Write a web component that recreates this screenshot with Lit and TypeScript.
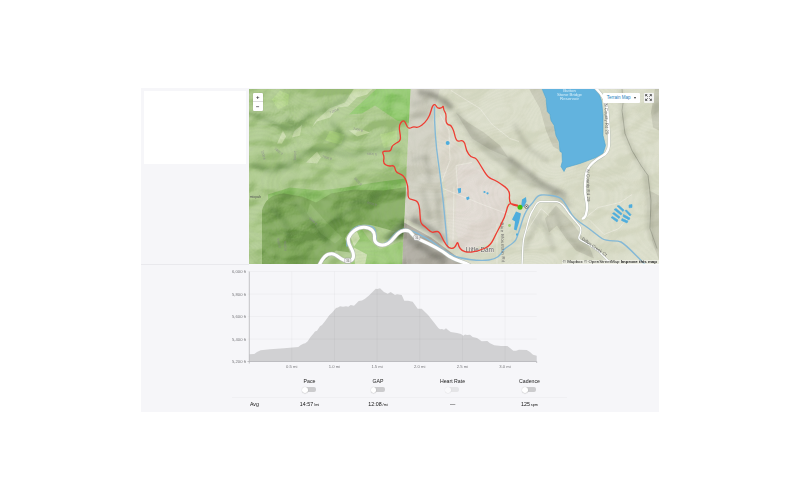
import { LitElement, css, html, svg } from "lit";
import { customElement, property } from "lit/decorators.js";

const ROUTE = [
  [518, 205.5], [513, 205.3], [509, 201], [510, 190], [500, 182.7], [495, 179.7], [488, 177],
  [481, 165.7], [476, 157.3], [471, 157], [466.3, 150.3], [465, 142.3], [462, 139.7],
  [457.3, 141.3], [455, 136.3], [454, 130.7], [450.7, 124.3], [448.3, 124.7], [445.7, 121.3],
  [446.3, 113.3], [443.7, 110], [443.3, 105], [442, 107.5], [437.3, 108], [435.3, 103.5],
  [432.3, 105.3], [430, 114.7], [425, 122.3], [418.3, 127.4], [413.3, 126], [410, 128],
  [407.3, 127], [405.3, 121.3], [402.7, 119.7], [398.7, 125.3], [400.7, 136.3], [400, 140.8],
  [392, 144.7], [391, 150.7], [386.7, 150.5], [382, 151], [384.4, 156.3], [383, 162.5],
  [388.3, 166], [394.5, 164.7], [395.7, 172], [404, 174.7], [408.3, 186], [407.7, 198],
  [413.3, 199.3], [418, 201], [420, 209.3], [420.3, 222.7], [425, 226], [431.7, 232.4],
  [435, 231], [439.3, 231], [443.3, 240], [449, 248.2], [455, 247.6], [457.6, 240.5],
  [458.7, 246], [461.7, 250], [468.3, 252.2], [480, 250], [490.5, 245], [496, 233.3],
  [505, 216.7], [508.3, 202.5], [514, 204], [518, 205],
];

const HIGHWAY =
  "M319 265C323 257 326 253.3 331.7 253.3S340 260 347 260.5S354 256 353 252S347 243 348.5 237.7S357 226.5 364 226.7S375 231 374.5 237S381 247 388 243S396 231 404 230S411 235 416.7 237.7S438 247 446.7 254S462 260 470 265";

const CREEK_BANK =
  "M347 246C346 236 351 225.5 363 225S376 229 376 237S382 245 387 241.5S396 229 404 228.5S424 237 432 241";

const RIVER =
  "M432 241C441 248 446 252 453 255S478 261 489 259.5S501 252 504 249S514 243 516 239S520 227 523 218S529 206 532 203S536 195 541 194.5S557 195 561 198S568 209 572 214.3S580 222 586 226S596 234 602 238S616 239 621 241.5S634 253 645 264";

const COUNTY_ROAD =
  "M595 87C604 95 607 104 607.5 111S609 133 609 138S610 151 603 155S590 163 587.5 169S585 184 585 190S588 204 587 209S586 217 582 218.5";

const SIDE_ROAD =
  "M522 265C523 252 522 243 524.5 235S529 215 532 211S536 201.5 540 201.2H557C562 202 565 207 569 213L580 226C584 234 574 237 582 240.5S594 247 599 251L609 261";

const LAKE =
  "M542 88L546 98L547.3 111L550 114L551 120L554 124.7L556 135L559 141.3L560 151L562 152L562.3 161L561 166L564 171L566 167L580 163L596 157L603 153L605.5 145L603 135L603 115L601.7 101L597.5 88Z";

const PROFILE = [
  [249.3, 354.3], [254.3, 354], [257, 352], [260.7, 350.3], [270, 349.3], [284, 348.3],
  [298.3, 347], [300.5, 345.3], [303.3, 343.7], [305.3, 343.2], [307.7, 341.3], [310.5, 337],
  [313.3, 333.7], [315, 331.5], [317, 330.7], [320, 326.3], [322, 325], [325, 321.3],
  [329.3, 315.3], [332, 312.8], [336, 308], [338, 307.5], [340, 306.3], [343, 306.8],
  [346, 306.2], [348.3, 306.7], [350.7, 305], [354, 305.7], [358.7, 301], [362, 300.4],
  [365, 298.7], [369, 295.5], [375.7, 288.7], [377.5, 289], [380, 288.3], [384, 292],
  [387.7, 293.7], [390.7, 292], [395, 295], [397, 294.2], [401.7, 295], [404.3, 300.7],
  [408, 300.8], [412.7, 301.7], [417.7, 308.7], [421.7, 308.7], [428.3, 315.3], [438.3, 328],
  [440, 329.3], [442, 328.9], [444, 329.7], [446, 328.3], [448, 330], [450.7, 332],
  [457, 333], [461, 334], [463.3, 335.7], [465, 334.5], [467, 335], [470, 334.7],
  [472.7, 337], [477, 338], [481.7, 341.3], [487.3, 341], [490, 343.3], [494.3, 345.3],
  [501, 346], [507.3, 346], [510, 348], [513.3, 350.7], [516, 350.7], [519, 349.7],
  [526.7, 350], [530, 352], [533, 354.7], [536.7, 355.7],
];

// Rounds the corners of a polyline by curving between segment midpoints
function smooth(points: number[][]) {
  let d = `M${points[0].join(" ")}`;
  for (let i = 1; i < points.length - 1; i++) {
    const [x, y] = points[i];
    const [nx, ny] = points[i + 1];
    d += `Q${x} ${y} ${(x + nx) / 2} ${(y + ny) / 2}`;
  }
  return d + `L${points[points.length - 1].join(" ")}`;
}

@customElement("terrain-map")
export class TerrainMap extends LitElement {
  renderFilters() {
    return svg`
      <filter id="relief" x="0" y="0" width="100%" height="100%" color-interpolation-filters="sRGB">
        <feTurbulence type="fractalNoise" baseFrequency="0.02 0.028" numOctaves="3" seed="8" />
        <feColorMatrix values="0 0 0 0 0  0 0 0 0 0  0 0 0 0 0  1 0 0 0 0" />
        <feDiffuseLighting surfaceScale="20" diffuseConstant=".88" lighting-color="#fff">
          <feDistantLight azimuth="225" elevation="38" />
        </feDiffuseLighting>
      </filter>
      <filter id="contours" x="0" y="0" width="100%" height="100%">
        <feTurbulence type="fractalNoise" baseFrequency="0.018 0.022" numOctaves="1" seed="8" />
        <feColorMatrix values="0 0 0 0 .3  0 0 0 0 .38  0 0 0 0 .25  1 0 0 0 0" />
        <feComponentTransfer>
          <feFuncA type="table" tableValues="0 1 0 1 0 1 0 1 0 1 0 1 0 1 0 1 0 1 0 1 0 1 0 1 0 1 0 1 0 1 0 1 0 1 0 1 0 1 0 1 0 1 0 1 0 1 0 1 0 1 0" />
        </feComponentTransfer>
      </filter>
      <filter id="soft" x="-20%" y="-20%" width="140%" height="140%">
        <feGaussianBlur stdDeviation="2" />
      </filter>
      <clipPath id="park"><path d="M249 88H410.5L402 265H249Z" /></clipPath>`;
  }

  renderForest() {
    return svg`
      <g clip-path="url(#park)">
        <rect x="249" y="88" width="164" height="177" fill="#aecb8d" />
        <path d="M349 114L355 108L377 88H412V123L397 120L375 105L362 113Z" fill="#93cb70" />
        <path d="M268 194L290 187L320 190L345 187L375 182L412 177V215L268 215Z" fill="#90c16b" />
        <path d="M262 210Q266 194 284 193L302 196L316 202L331 193L354 189L383 190L411 186V222L395 231L377 226Q355 219 345 238L350 252L336 250L319 265H262Z" fill="#7fa85a" />
        <path d="M310 203L325 220L342 237L335 243L321 233L307 213Z" fill="#8cb368" />
        <path d="M351 233L362 229L369 239L380 249L401 241L410 246V265H351L354 250Z" fill="#9cca76" />
        <path d="M383 239L402 220L411 224V233L392 240Z" fill="#66854f" filter="url(#soft)" />
        <g fill="#cddfb0">
          <path d="M354 88H373L367 94L357 97L348 106L338 107L330 117L317 121L312 127L316 120L329 108L345 102Z" />
          <path d="M294 131L302 124L300 135L292 137ZM277 143L283 130L286 136L282 143Z" />
          <path d="M306 162L317 151L321 157L317 163ZM349 130L362 129L370 132L357 136Z" />
          <path d="M350 235L357 231L360 238L354 246ZM354 247L367 254L365 265H355Z" />
        </g>
        <path d="M272 99L280 90L289 94L288 104L278 109ZM380 134L397 130V143L384 148ZM330 130L345 134L341 144L325 140Z" fill="#b8d890" />
        <g class="ridge" filter="url(#soft)">
          <path d="M249 113Q267 118 278 125L294 130L306 116L328 108L348 96" />
          <path d="M277 166L294 161L310 149L330 151L350 155L375 149L400 150" />
          <path d="M250 164L271 171L294 166M287 117L297 128M330 122L344 135L338 147" />
          <path d="M270 208L284 219L290 239M294 202L316 226L330 246M353 209L330 222M380 194L350 205" />
        </g>
      </g>`;
  }

  renderValley() {
    return svg`
      <path d="M410.5 88H659V265H402Z" fill="#dcdecb" />
      <path d="M410.5 88H440L433 116L437 163L445 200L449 245L421 225L404 218Z" fill="#d2d1c4" />
      <path d="M440 108L457 144L475 159L508 190L505 214L488 243L461 251L450 240L446 190L437 154Z" fill="#dfdbd0" />
      <path d="M458 165L470 163L483 172L508 190L505 214L488 243L461 250L455 225Z" fill="#e2dbd4" />
      <path d="M404 222L431 237L458 257L468 265H402Z" fill="#b3afa6" />
      <g fill="#c9cab8">
        <path d="M529 88H542L546 100L555 130L560 150L553 146L546 130L540 108Z" />
        <path d="M545 218L556 205L572 222L589 245L594 258L576 250L566 238L557 225L549 232Z" />
        <path d="M655 88H659V130L653 127L651 112ZM649 190L659 195V260L652 240Z" />
        <path d="M456 112L468 122L484 132L500 145L508 157L490 149L472 138Z" />
      </g>
      <g class="ridge rock" filter="url(#soft)">
        <path d="M418 92L430 93L446 102L452 108" stroke-width="6" />
        <path d="M508 158L522 168L543 184L566 195" stroke-width="5" />
        <path d="M412 219L430 229L444 240M408 238L430 252L446 262" stroke-width="7" />
      </g>
      <g class="ridge light" filter="url(#soft)">
        <path d="M455 112L467 126L477 138L500 153L512 162M468 131L490 153L507 165L526 180L550 190L570 206" stroke-width="7" />
        <path d="M620 90L622 103L624 133L634 153L646 173L649 200L649 229L657 249M657 95L656 118" />
        <path d="M514 123L522 138L532 151L548 160M531 219L550 225" />
        <path d="M541 212L533 230L524 249M553 207L562 229L577 246L594 255M544 222L554 250" />
        <path d="M412 104L429 99M412 116L428 112M412 160L426 156L430 182M423 190L430 220M437 190L441 230" />
      </g>
      <path class="cliff" d="M622 88L623 103L622 110L625 133L632 150L641 165L648 175L651 200L650 228L657 248" />
      <path class="track" d="M451 90L467 100L480 108L492 124L510 138L519 141M440 114L449 130L450 160L440 186M443 188L480 203L509 214M458 192L456 165L472 162M454 186L453 240M497 223V265M587 216L598 207L620 202L632 194M589 219L604 234L619 228L629 216M549 215L541 208L526 232" />`;
  }

  renderWater() {
    return svg`
      <path d=${LAKE} fill="#62b3de" stroke="#4ba2cf" stroke-width=".6" />
      <g class="stream">
        <path d="M434.5 106C434 138 437 151 440 174S444 206 446 230S447 243 449 248" />
        <path d=${CREEK_BANK} />
        <path d=${RIVER} />
      </g>
      <g class="pond">
        <circle cx="447.7" cy="142.5" r="2" />
        <path d="M457.5 188L461 187.5V192L458.5 193ZM466 197L469 196L469.5 198.5L467 199.7Z" />
        <circle cx="484.5" cy="191.5" r="1.1" /><circle cx="487.5" cy="192.8" r="1.1" />
        <path d="M522 199L526 196.5L526.5 201L524 206L521 207ZM516 211L521 213L519 222L516.5 230L514 229L515 221L512 219Z" />
        <path d="M516 233H518V235H516Z" />
        <g stroke="#4eaddd" stroke-width=".6">
          <path d="M617 205.5L619 205L624 209.5L623 211ZM614 209L616 208L622 213L621 214.5ZM612.5 213L614 212L620 216.5L619 218ZM611 217L612.5 216L618 219.5L617 221.5Z" />
          <path d="M625 210L626.5 209.5L631 214L630 215.5ZM623.5 214L630 217.5L629 219.5L623 216ZM622 218L628 220.5L627 222.5L621.5 220ZM629 204.5L632 204V207L629 207.3Z" />
        </g>
      </g>
      <circle cx="509.5" cy="225" r="1.4" fill="#9bcc73" />`;
  }

  renderRoads() {
    return svg`
      <g class="casing">
        <path d=${HIGHWAY} stroke-width="4.2" />
        <path d=${COUNTY_ROAD} stroke-width="3.2" />
        <path d=${SIDE_ROAD} stroke-width="2" />
      </g>
      <g class="road">
        <path d=${HIGHWAY} stroke-width="3.1" />
        <path d=${COUNTY_ROAD} stroke-width="2.4" />
        <path d=${SIDE_ROAD} stroke-width="1.3" />
      </g>
      <g class="shield">
        <rect x="344.8" y="257.7" width="6" height="5" rx="1" />
        <rect x="413.8" y="234.7" width="6" height="5" rx="1" />
        <text x="347.8" y="261.4">36</text>
        <text x="416.8" y="238.4">36</text>
      </g>`;
  }

  renderLabels() {
    return svg`
      <g class="lake-label">
        <text x="569.5" y="91.4">Button</text>
        <text x="569.5" y="95" textLength="25">Stone Bridge</text>
        <text x="569.5" y="99.2">Reservoir</text>
      </g>
      <g class="road-label">
        <text transform="translate(604.5 103) rotate(88)" textLength="31">N County Rd 29</text>
        <text transform="translate(586.5 169) rotate(89)" textLength="32">N County Rd 29</text>
        <text transform="translate(581.5 239) rotate(35)">Dillon Creek Ct</text>
        <text transform="translate(500.5 222) rotate(88)" textLength="40">Blue Mountain Rd</text>
      </g>
      <text class="place" x="465.5" y="251.8" textLength="28.5">Little Dam</text>
      <g class="heights">
        <text transform="translate(330 113) rotate(-18)">7200 ft</text>
        <text transform="translate(353 129) rotate(14)">7400 ft</text>
        <text transform="translate(322 157) rotate(15)">7000 ft</text>
        <text transform="translate(367 154) rotate(6)">6800 ft</text>
        <text transform="translate(274 149) rotate(35)">7400 ft</text>
        <text transform="translate(261 150) rotate(75)">7200 ft</text>
        <text transform="translate(296 160) rotate(-88)">7000 ft</text>
        <text transform="translate(354 178) rotate(50)">6600 ft</text>
        <text transform="translate(309 218) rotate(45)">6600 ft</text>
        <text transform="translate(277 238) rotate(80)">6400 ft</text>
        <text transform="translate(284 241) rotate(88)">6200 ft</text>
        <text transform="translate(367 203) rotate(15)">6000 ft</text>
      </g>
      <text class="edge-label" x="249.8" y="197.6">mtopah</text>`;
  }

  render() {
    return html`
      <svg class="canvas" viewBox="249 88.5 410 175.5">
        <defs>${this.renderFilters()}</defs>
        ${this.renderValley()} ${this.renderForest()}
        <rect class="relief" x="249" y="88" width="158" height="177" filter="url(#relief)" />
        <rect class="relief faint" x="407" y="88" width="252" height="177" filter="url(#relief)" />
        <rect class="contours" x="249" y="88" width="158" height="177" filter="url(#contours)" />
        <rect class="contours pale" x="407" y="88" width="252" height="177" filter="url(#contours)" />
        ${this.renderWater()} ${this.renderRoads()} ${this.renderLabels()}
        <path class="route" d=${smooth(ROUTE)} />
        <circle cx="520" cy="206.7" r="2.5" fill="#41bd09" />
        <rect x="524.8" y="204.3" width="3.4" height="3.6" rx="1.4" fill="#eee" stroke="#666" stroke-width=".8" />
        <path d="M525.8 205.4l1.4 1.4m0-1.4l-1.4 1.4" stroke="#444" stroke-width=".7" />
      </svg>
      <div class="zoom">
        <span class="zoom-button">+</span>
        <span class="zoom-button">−</span>
      </div>
      <div class="tools">
        <div class="layer">Terrain Map <i class="caret"></i></div>
        <div class="full">
          <svg width="7" height="7" viewBox="0 0 7 7">
            <path
              d="M2.3.6H.6V2.3M.6.6L2.7 2.7M4.7.6H6.4V2.3M6.4.6L4.3 2.7M2.3 6.4H.6V4.7M.6 6.4L2.7 4.3M4.7 6.4H6.4V4.7M6.4 6.4L4.3 4.3"
              fill="none"
              stroke="#444"
              stroke-width=".8"
            />
          </svg>
        </div>
      </div>
      <div class="credit">© Mapbox © OpenStreetMap <b>Improve this map</b></div>
    `;
  }

  static styles = css`
    :host {
      display: block;
      position: relative;
      overflow: hidden;
    }

    .canvas {
      display: block;
      width: 410px;
      height: 175.5px;
    }

    .relief {
      mix-blend-mode: soft-light;
      opacity: 0.4;
    }

    .faint {
      opacity: 0.22;
    }

    .contours {
      opacity: 0.12;
    }

    .pale {
      opacity: 0.06;
    }

    .ridge {
      fill: none;
      stroke: #557d40;
      stroke-width: 4;
      stroke-linejoin: round;
      opacity: 0.38;
    }

    .rock {
      stroke: #6c6c62;
      opacity: 0.5;
    }

    .light {
      stroke: #7f8172;
      opacity: 0.28;
    }

    .cliff {
      fill: none;
      stroke: #77796a;
      stroke-width: 0.7;
      opacity: 0.6;
    }

    .track {
      fill: none;
      stroke: #f4f2ea;
      stroke-width: 0.7;
      opacity: 0.75;
    }

    .stream {
      fill: none;
      stroke: #84b8d6;
      stroke-width: 1.4;
    }

    .pond {
      fill: #4eaddd;
    }

    .casing {
      fill: none;
      stroke: #b4bbb2;
    }

    .road {
      fill: none;
      stroke: #fff;
    }

    .shield {
      fill: #fff;
      stroke: #888;
      stroke-width: 0.5;
    }

    .shield text {
      fill: #555;
      stroke: none;
      font-size: 3.2px;
      text-anchor: middle;
    }

    .lake-label {
      fill: #d8effa;
      font-size: 4.4px;
      text-anchor: middle;
    }

    .road-label {
      fill: #666;
      font-size: 4.4px;
    }

    .heights {
      fill: #857f8d;
      font-size: 3.2px;
      opacity: 0.8;
    }

    .place {
      fill: #666;
      font-size: 6.5px;
      stroke: #e9e5df;
      stroke-width: 1px;
      paint-order: stroke;
    }

    .edge-label {
      fill: #555;
      font-size: 3.4px;
    }

    .route {
      fill: none;
      stroke: #ee3c32;
      stroke-width: 1.3;
      stroke-linejoin: round;
    }

    .zoom {
      position: absolute;
      left: 4px;
      top: 4px;
      width: 9.5px;
      height: 18.5px;
      display: flex;
      flex-direction: column;
      background: #fff;
      border-radius: 1px;
      box-shadow: 0 0 1px rgba(0, 0, 0, 0.3);
    }

    .zoom-button {
      flex: 1;
      display: flex;
      align-items: center;
      justify-content: center;
      color: #333;
      font-size: 6px;
      font-weight: bold;
      line-height: 1;
    }

    .zoom-button + .zoom-button {
      border-top: 0.5px solid #ddd;
    }

    .tools {
      position: absolute;
      right: 5.5px;
      top: 4px;
      display: flex;
      gap: 4px;
    }

    .layer,
    .full {
      display: flex;
      align-items: center;
      justify-content: center;
      height: 10px;
      background: #fff;
      border-radius: 1px;
    }

    .layer {
      width: 36.5px;
      gap: 3px;
      color: #1b7dba;
      font-size: 4.5px;
      white-space: nowrap;
    }

    .full {
      width: 10px;
      background: #f4f4f4;
    }

    .caret {
      border: 1.3px solid transparent;
      border-top: 2px solid #333;
      border-bottom: 0;
    }

    .credit {
      position: absolute;
      right: 0;
      bottom: 0;
      padding: 0 2px 0 1px;
      background: rgba(255, 255, 255, 0.45);
      color: #222;
      font-size: 4.4px;
      line-height: 4.6px;
      white-space: nowrap;
    }
  `;
}

@customElement("elevation-chart")
export class ElevationChart extends LitElement {
  render() {
    const line = PROFILE.map((p) => p.join(" ")).join("L");
    const rows = [6000, 5800, 5600, 5400, 5200];
    const miles = ["0.5", "1.0", "1.5", "2.0", "2.5", "3.0"];
    return html`
      <svg class="chart" viewBox="141 265 518 107">
        <path class="area" d="M249.3 361.5L${line}V361.5Z" />
        ${rows.map((feet, i) => {
          const y = 271.6 + i * 22.5;
          return svg`
            <path class="grid" d="M247.5 ${y}H536.7" />
            <text class="feet" x="246" y=${y + 1.4}>${feet.toLocaleString("en-US")} ft</text>`;
        })}
        ${miles.map((mile, i) => {
          const x = 291.8 + i * 42.65;
          return svg`
            <path class="grid" d="M${x} 271.6V361.5" />
            <text class="mile" x=${x} y="367.8">${mile} mi</text>`;
        })}
        <path class="axis" d="M249.3 271.6V363.5M247.5 361.5H536.7V363" />
      </svg>
    `;
  }

  static styles = css`
    :host {
      display: block;
      height: 107px;
    }

    .chart {
      display: block;
      width: 518px;
      height: 107px;
    }

    .area {
      fill: #d1d1d3;
    }

    .grid {
      stroke: #000;
      stroke-width: 0.6;
      opacity: 0.05;
    }

    .axis {
      fill: none;
      stroke: #b5b5b9;
      stroke-width: 0.8;
    }

    .feet,
    .mile {
      fill: #77777b;
      font-size: 4.2px;
    }

    .feet {
      text-anchor: end;
    }

    .mile {
      text-anchor: middle;
    }
  `;
}

@customElement("metric-column")
export class MetricColumn extends LitElement {
  @property() label = "";
  @property() value = "";
  @property() unit = "";
  @property({ type: Boolean }) disabled = false;

  render() {
    return html`
      <div class="label">${this.label}</div>
      <div class="switch ${this.disabled ? "off" : ""}"><i class="knob"></i></div>
      <div class="value">${this.value} <small class="unit">${this.unit}</small></div>
    `;
  }

  static styles = css`
    :host {
      display: flex;
      flex-direction: column;
      align-items: center;
      color: #222;
      font-size: 5.2px;
      line-height: 7px;
      white-space: nowrap;
    }

    .label {
      height: 9.2px;
    }

    .switch {
      width: 13px;
      height: 4.8px;
      border-radius: 2px;
      background: #ccccce;
    }

    .off {
      opacity: 0.4;
    }

    .knob {
      display: block;
      width: 5.6px;
      height: 5.6px;
      margin-left: -1px;
      border-radius: 50%;
      background: #fff;
      box-shadow: 0 0.3px 1px rgba(0, 0, 0, 0.35);
    }

    .value {
      margin-top: 9.2px;
      color: #111;
      font-size: 5.3px;
    }

    .unit {
      margin-left: -0.5px;
      font-size: 3.8px;
    }
  `;
}

@customElement("app-root")
export class AppRoot extends LitElement {
  render() {
    return html`
      <main class="activity">
        <section class="top">
          <aside class="side"><div class="card"></div></aside>
          <terrain-map></terrain-map>
        </section>
        <elevation-chart></elevation-chart>
        <section class="metrics">
          <div class="avg">Avg</div>
          <metric-column label="Pace" value="14:57" unit="/mi"></metric-column>
          <metric-column label="GAP" value="12:08" unit="/mi"></metric-column>
          <metric-column label="Heart Rate" value="—" disabled></metric-column>
          <metric-column label="Cadence" value="125" unit="spm"></metric-column>
        </section>
      </main>
    `;
  }

  static styles = css`
    :host {
      display: block;
      box-sizing: border-box;
      height: 500px;
      padding: 88px 141px;
      background: #fff;
      font-family: "Liberation Sans", Arial, sans-serif;
    }

    .activity {
      box-sizing: border-box;
      height: 324px;
      padding-top: 0.5px;
      background: #f6f6f9;
      overflow: hidden;
    }

    .top {
      display: grid;
      grid-template-columns: 108px 410px;
      height: 176.5px;
    }

    .side {
      box-sizing: border-box;
      padding: 2px 3px 0 2.5px;
      border-bottom: 1px solid #e9e9ed;
    }

    .card {
      height: 73.5px;
      background: #fff;
    }

    .metrics {
      display: grid;
      grid-template-columns: 43.5px 68px 69px 80px 74px;
      margin-left: 91px;
      width: 335px;
      height: 40px;
      padding-top: 6px;
      background: linear-gradient(#f0f0f3, #f0f0f3) 0 25px / 335px 1px no-repeat;
    }

    .avg {
      padding: 23px 0 0 18px;
      color: #111;
      font-size: 5.2px;
      line-height: 7px;
    }
  `;
}
